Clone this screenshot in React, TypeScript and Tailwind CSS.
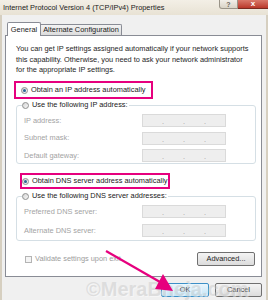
import type { ReactNode } from "react";

function Radio({ checked }: { checked?: boolean }) {
  return (
    <span className="flex h-[7px] w-[7px] shrink-0 items-center justify-center rounded-full border border-[#8e8f8f] bg-gradient-to-br from-[#d4d4d4] to-[#f8f8f8]">
      {checked && <span className="h-[3px] w-[3px] rounded-full bg-[#2a6496]" />}
    </span>
  );
}

function IpField() {
  return (
    <div className="flex h-[13px] w-[84px] items-end justify-evenly border border-[#dadada] bg-[#eeeeee] pb-[1px] leading-[7px] text-[#9c9c9c]">
      <span>.</span>
      <span>.</span>
      <span>.</span>
    </div>
  );
}

function FieldRow({ label }: { label: string }) {
  return (
    <div className="flex items-center pl-[2px]">
      <span className="w-[118px] text-[#a3a3a3]">{label}</span>
      <IpField />
    </div>
  );
}

function Btn({ children, focused, w }: { children: ReactNode; focused?: boolean; w: string }) {
  return (
    <button
      className={`flex h-[14px] ${w} items-center justify-center rounded-[2px] border text-[#1e1e1e] ${
        focused
          ? "border-[#3d90c7] bg-gradient-to-b from-[#eaf6fd] to-[#c4e5f6]"
          : "border-[#707070] bg-gradient-to-b from-[#f4f4f4] to-[#dcdcdc]"
      }`}
    >
      {children}
    </button>
  );
}

export default function App() {
  return (
    <div className="relative h-[300px] w-[268px] overflow-hidden bg-[#d6cfc0] font-['Liberation_Sans',Arial,sans-serif] text-[7.4px] leading-none text-[#1a1a1a]">
      {/* title bar */}
      <div className="flex h-[15px] items-start bg-gradient-to-b from-[#f3efe6] to-[#e8e2d4]">
        <span className="pl-[3px] pt-[4px] text-[#222]">Internet Protocol Version 4 (TCP/IPv4) Properties</span>
        <div className="ml-auto flex">
          <div className="flex h-[9px] w-[19px] items-center justify-center rounded-bl-[3px] border border-t-0 border-[#9a9488] bg-gradient-to-b from-[#f2efe9] to-[#d9d3c6] text-[7px] font-bold text-[#6c6658]">
            ?
          </div>
          <div className="flex h-[9px] w-[30px] items-center justify-center border-b border-[#7a2a20] bg-gradient-to-b from-[#d9786a] to-[#b9372a] text-[8px] font-bold text-white">
            x
          </div>
        </div>
      </div>

      {/* client area */}
      <div className="ml-[2px] mr-[2px] h-[285px] bg-[#f0f0f0] pl-[3px] pt-[6px]">
        {/* tabs */}
        <div className="flex h-[14px] items-end pl-[2px]">
          <div className="relative z-10 -mb-px flex h-[14px] w-[34px] items-start justify-center rounded-t-[2px] border border-b-0 border-[#898c95] bg-white pt-[3px]">
            General
          </div>
          <div className="flex h-[11px] w-[81px] items-center justify-center rounded-tr-[2px] border border-l-0 border-b-0 border-[#898c95] bg-gradient-to-b from-[#f3f3f3] to-[#dcdcdc]">
            Alternate Configuration
          </div>
        </div>

        {/* panel */}
        <div className="flex h-[242px] w-[257px] flex-col border border-[#898c95] bg-white">
          <p className="ml-[10px] mt-[8px] leading-[10.5px] text-[#1e1e1e]">
            <span className="block">You can get IP settings assigned automatically if your network supports</span>
            <span className="block">this capability. Otherwise, you need to ask your network administrator</span>
            <span className="block">for the appropriate IP settings.</span>
          </p>

          <div className="ml-[8px] mt-[5.5px] flex h-[18px] w-[139px] items-center gap-[3px] border-2 border-[#e6007e] pl-[5px]">
            <Radio checked />
            <span>Obtain an IP address automatically</span>
          </div>

          <fieldset className="ml-[10px] mt-[1px] w-[240px] rounded-[3px] border border-[#d5dfe5] pb-[1px] pl-[5px]">
            <legend className="pr-[1px]">
              <span className="flex h-[10px] items-center gap-[3px]">
                <Radio />
                <span>Use the following IP address:</span>
              </span>
            </legend>
            <div className="flex flex-col gap-[4.5px] pt-[4px]">
              <FieldRow label="IP address:" />
              <FieldRow label="Subnet mask:" />
              <FieldRow label="Default gateway:" />
            </div>
          </fieldset>

          <div className="ml-[14px] mt-[9px] flex h-[16px] w-[150px] items-center gap-[3px] border-2 border-[#e6007e]">
            <Radio checked />
            <span>Obtain DNS server address automatically</span>
          </div>

          <fieldset className="ml-[10px] mt-[2px] w-[240px] rounded-[3px] border border-[#d5dfe5] pb-[3px] pl-[5px]">
            <legend className="pr-[1px]">
              <span className="flex h-[10px] items-center gap-[3px]">
                <Radio />
                <span>Use the following DNS server addresses:</span>
              </span>
            </legend>
            <div className="flex flex-col gap-[6px] pt-[4px]">
              <FieldRow label="Preferred DNS server:" />
              <FieldRow label="Alternate DNS server:" />
            </div>
          </fieldset>

          <div className="mt-[11px] flex items-center justify-between pl-[19px] pr-[6px]">
            <div className="flex items-center gap-[3px] text-[#9c9c9c]">
              <span className="h-[7px] w-[7px] border border-[#b4b4b4] bg-[#f4f4f4]" />
              <span>Validate settings upon exit</span>
            </div>
            <Btn w="w-[58px]">Advanced...</Btn>
          </div>
        </div>

        {/* footer */}
        <div className="flex w-[257px] justify-end gap-[6px] pt-[6px]">
          <Btn w="w-[48px]" focused>
            OK
          </Btn>
          <Btn w="w-[47px]">Cancel</Btn>
        </div>
      </div>

      {/* watermark */}
      <div className="pointer-events-none absolute left-[86px] top-[279px] text-[20px] font-bold leading-none text-[#c8c8c8] opacity-45 [text-shadow:1px_1px_0_#ffffff]">
        ©MeraBheja.com
      </div>

      {/* annotation arrow */}
      <svg className="pointer-events-none absolute left-0 top-0" width="268" height="300" viewBox="0 0 268 300">
        <line x1="106" y1="251" x2="160" y2="282" stroke="#e6007e" strokeWidth="2.2" />
        <polygon points="173,291 155,289 163,274" fill="#e6007e" />
      </svg>
    </div>
  );
}
